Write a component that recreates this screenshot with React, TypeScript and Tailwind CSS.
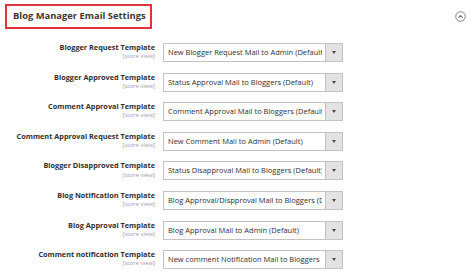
const rows = [
  { label: "Blogger Request Template", value: "New Blogger Request Mail to Admin (Default)" },
  { label: "Blogger Approved Template", value: "Status Approval Mail to Bloggers (Default)" },
  { label: "Comment Approval Template", value: "Comment Approval Mail to Bloggers (Default)" },
  { label: "Comment Approval Request Template", value: "New Comment Mail to Admin (Default)" },
  { label: "Blogger Disapproved Template", value: "Status Disapproval Mail to Bloggers (Default)" },
  { label: "Blog Notification Template", value: "Blog Approval/Dispproval Mail to Bloggers (Default)" },
  { label: "Blog Approval Template", value: "Blog Approval Mail to Admin (Default)" },
  { label: "Comment notification Template", value: "New comment Notification Mail to Bloggers" },
];

export default function App() {
  return (
    <div
      className="w-[474px] h-[277px] bg-white overflow-hidden relative"
      style={{ fontFamily: '"Open Sans", sans-serif' }}
    >
      {/* Section header */}
      <div className="flex items-center justify-between pl-[5px] pr-[8px] pt-[4px]">
        <div className="h-[25px] w-[147px] border-2 border-[#e0333a] flex items-center pl-[6px]">
          <span className="text-[9.4px] font-bold text-[#41362f] whitespace-nowrap">
            Blog Manager Email Settings
          </span>
        </div>
        <svg width="11" height="11" viewBox="0 0 12 12">
          <circle cx="6" cy="6" r="5.2" fill="none" stroke="#777" strokeWidth="1" />
          <path d="M3.6 7.2 L6 4.8 L8.4 7.2" fill="none" stroke="#777" strokeWidth="1.1" />
        </svg>
      </div>

      {/* Fields */}
      <div className="flex flex-col gap-[10.6px] mt-[14px]">
        {rows.map((r) => (
          <div key={r.label} className="flex items-start h-[19px]">
            <div className="w-[155px] flex flex-col items-end leading-none pt-[1px]">
              <span className="text-[7.3px] font-bold text-[#303030] whitespace-nowrap">{r.label}</span>
              <span className="text-[6px] text-[#a0a0a0] mt-[2px]">[store view]</span>
            </div>
            <div className="ml-[8px] w-[180px] h-[19px] flex border border-[#c2c2c2] bg-white">
              <div className="flex-1 overflow-hidden whitespace-nowrap text-[7.5px] text-[#303030] pl-[4px] mr-[3px] leading-[17px]">
                {r.value}
              </div>
              <div className="w-[17px] h-full bg-[#e3e3e3] border-l border-[#c2c2c2] flex items-center justify-center">
                <span className="block w-0 h-0 border-l-[2.5px] border-r-[2.5px] border-t-[3px] border-l-transparent border-r-transparent border-t-[#514943]" />
              </div>
            </div>
          </div>
        ))}
      </div>
    </div>
  );
}
